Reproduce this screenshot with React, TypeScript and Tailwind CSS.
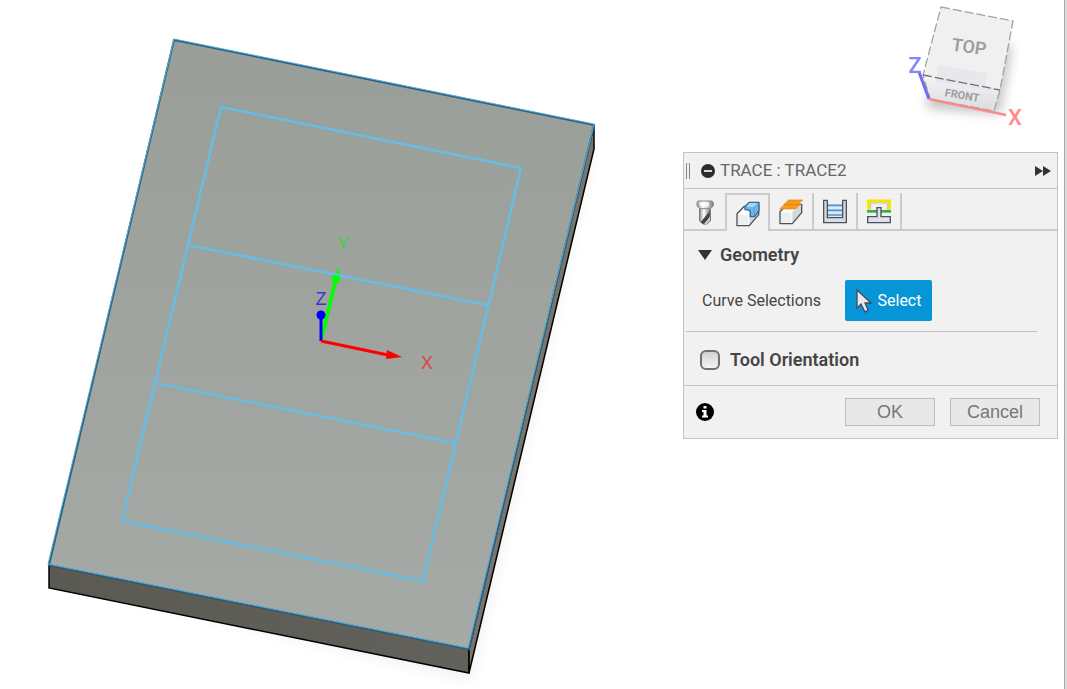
import type { ReactNode } from 'react';

function ToolIcon() {
  return (
    <svg viewBox="0 0 78 78" className="h-[26px] w-[26px]" aria-hidden="true">
      <defs>
        <linearGradient id="shank" x1="0" x2="1" y1="0" y2="0">
          <stop offset="0" stopColor="#9a9a9a" />
          <stop offset="0.4" stopColor="#ffffff" />
          <stop offset="1" stopColor="#7a7a7a" />
        </linearGradient>
      </defs>
      <path d="M23 28h32v38l-10 9H33l-10-9z" fill="url(#shank)" stroke="#6a6a6a" strokeWidth="3" />
      <path d="M26 70 53 36v20L35 75z" fill="#444444" />
      <path d="M46 74 54 64V52L38 75z" fill="#cccccc" />
      <path d="M18 6h42l4 5v10l-9 8H24l-9-8V11z" fill="url(#shank)" stroke="#8a8a8a" strokeWidth="3" />
      <path d="M21 10h30v12H26z" fill="#ffffff" opacity="0.8" />
    </svg>
  );
}

function Block() {
  return (
    <>
      <path d="M6 38 28 16h43v25L43 74H6z" fill="#ffffff" />
      <path d="M43 38 71 16v25L43 74z" fill="#d3d6da" />
      <path d="M9 41h31v30H9z" fill="#eceef0" />
      <path d="M6 38 28 16h43v25L43 74H6z" fill="none" stroke="#4c525c" strokeWidth="4" strokeLinejoin="round" />
    </>
  );
}

function GeometryIcon() {
  return (
    <svg viewBox="0 0 78 78" className="h-[26px] w-[26px]" aria-hidden="true">
      <Block />
      <path d="M30 17 43 4h29v25L58 47H46V34q0-8-16-8z" fill="#6fb5e6" stroke="#286a9f" strokeWidth="4" strokeLinejoin="round" />
      <path d="M33 17 44 6h25L58 18z" fill="#a8d6f5" />
      <path d="M57 20v24M57 19 69 7" stroke="#4a91c8" strokeWidth="2" />
    </svg>
  );
}

function HeightsIcon() {
  return (
    <svg viewBox="0 0 78 78" className="h-[26px] w-[26px]" aria-hidden="true">
      <Block />
      <path d="M5 30 20 16h48L52 30z" fill="#f59b1c" stroke="#db8412" strokeWidth="2" />
      <path d="M17 17 32 3h42L58 17z" fill="#f59b1c" stroke="#db8412" strokeWidth="2" />
    </svg>
  );
}

function PassesIcon() {
  return (
    <svg viewBox="0 0 78 78" className="h-[26px] w-[26px]" aria-hidden="true">
      <path d="M17 14h44v44H17z" fill="#dde8f3" />
      <path d="M18 19h42M18 34h42M18 48h42" stroke="#4a93d6" strokeWidth="5" />
      <path d="M5 4h11v52h46V4h11v67H5z" fill="#d9dde3" stroke="#4c525c" strokeWidth="4" />
    </svg>
  );
}

function LinkingIcon() {
  return (
    <svg viewBox="0 0 78 78" className="h-[26px] w-[26px]" aria-hidden="true">
      <path d="M8 32V6h62v26" fill="none" stroke="#f7e500" strokeWidth="9" />
      <path d="M14 32V12h50v20" fill="none" stroke="#b8b48a" strokeWidth="2" />
      <path d="M3 37h72" stroke="#38ad4b" strokeWidth="8" />
      <path d="M33 26h12v27h28v18H5V53h28z" fill="#dde1e7" stroke="#4c525c" strokeWidth="4" />
    </svg>
  );
}

function Model() {
  return (
    <svg viewBox="0 0 683 689" className="block w-full" role="img" aria-label="Stock model">
      <defs>
        <linearGradient id="face" x1="0" x2="0" y1="0" y2="1">
          <stop offset="0" stopColor="#999e99" />
          <stop offset="1" stopColor="#a5aaa6" />
        </linearGradient>
        <linearGradient id="edge" x1="0" x2="1" y1="0" y2="0">
          <stop offset="0" stopColor="#5a5952" />
          <stop offset="1" stopColor="#62615b" />
        </linearGradient>
        <filter id="soft" x="-10%" y="-10%" width="120%" height="130%">
          <feGaussianBlur stdDeviation="7" />
        </filter>
      </defs>
      <path d="M54 580 594 145 474 668 470 680z" fill="#000000" opacity="0.06" filter="url(#soft)" />
      <path d="M49 565 469 649V673L49 588z" fill="url(#edge)" stroke="#000000" strokeWidth="1.5" />
      <path d="M594 125V149L469 673V649z" fill="#77756d" stroke="#000000" strokeWidth="1.5" />
      <path d="M174 40 594 125 469 649 49 565z" fill="url(#face)" stroke="#2c6384" strokeWidth="2" />
      <path d="M174 39 594 124 468 648 48 564z" fill="none" stroke="#58acd2" strokeWidth="1" />
      <g fill="none" stroke="#66bde6" strokeWidth="2.5">
        <path d="M221 107 521 168 423 581 122 521z" />
        <path d="M188 245 487 305M155 383 455 443" />
      </g>
      <path d="M321 341 336 279" stroke="#00ff00" strokeWidth="3.5" />
      <path d="M339 268 340 281 331 279z" fill="#00ff00" />
      <circle cx="336" cy="279" r="4" fill="#00ff00" />
      <path d="M331 273 343 276" stroke="#66bde6" strokeWidth="2" />
      <path d="M321 341V315" stroke="#0000ff" strokeWidth="3" />
      <circle cx="321" cy="315" r="4.5" fill="#0000ff" />
      <path d="M321 341 388 355" stroke="#ff0000" strokeWidth="3" />
      <path d="M402 357 387 350 386 359z" fill="#ff0000" />
      <g fontFamily="Liberation Sans, sans-serif" fontSize="18" textAnchor="middle">
        <text x="343" y="250" fill="#45d045">Y</text>
        <text x="321" y="305" fill="#3535cf">Z</text>
        <text x="427" y="369" fill="#dc4545">X</text>
      </g>
    </svg>
  );
}

function ViewCube() {
  return (
    <svg viewBox="900 0 130 140" className="h-[140px] w-[130px]" role="img" aria-label="View cube">
      <defs>
        <filter id="cubeShadow" x="-30%" y="-30%" width="160%" height="160%">
          <feGaussianBlur stdDeviation="6" />
        </filter>
        <linearGradient id="front" x1="0" x2="0" y1="0" y2="1">
          <stop offset="0" stopColor="#f4f4f5" />
          <stop offset="1" stopColor="#dcdcde" />
        </linearGradient>
      </defs>
      <path d="M945 34 1012 46 1000 114 926 108z" fill="#000000" opacity="0.24" filter="url(#cubeShadow)" />
      <path d="M923 75 1000 90 994 111 930 99z" fill="url(#front)" />
      <path d="M941 7 1013 21 1000 90 923 75z" fill="#f0f0f1" />
      <path d="M938 65 987 73 985 90 936 82z" fill="#e6e8eb" />
      <path
        d="M941 7 1013 21 1000 90 994 111 930 99 923 75z"
        fill="none"
        stroke="#a3a3a3"
        strokeWidth="1.3"
        strokeDasharray="9 3"
      />
      <path d="M923 75 1000 90" stroke="#707070" strokeWidth="1.3" strokeDasharray="9 3" />
      <g fontFamily="Roboto, sans-serif" textAnchor="middle" fill="#9b9ea4">
        <text x="969" y="53" fontSize="18" fontWeight="600" transform="rotate(8 969 47)">TOP</text>
        <text x="962" y="99" fontSize="11" fontWeight="700" transform="rotate(10 962 96)">FRONT</text>
      </g>
      <path d="M919 72 929 99" stroke="#6e6ef5" strokeWidth="3" />
      <path d="M929 99 1006 115" stroke="#f98b8b" strokeWidth="2.5" />
      <g fontFamily="Roboto, sans-serif" fontSize="22" fontWeight="500" textAnchor="middle">
        <text x="915" y="73" fill="#8686fa">Z</text>
        <text x="1015" y="125" fill="#ff8c8c">X</text>
      </g>
    </svg>
  );
}

interface TabProps {
  label: string;
  active?: boolean;
  first?: boolean;
  children: ReactNode;
}

function Tab({ label, active, first, children }: TabProps) {
  const edges = active
    ? 'w-[45px] border-2 border-b-0 pb-0.5'
    : first
      ? 'w-[41px] border-b-2'
      : 'w-[44px] border-b-2 border-r-2';
  return (
    <button
      type="button"
      role="tab"
      aria-selected={!!active}
      aria-label={label}
      className={`flex h-[38px] items-end justify-center border-[#cbcbcb] pb-1 ${edges}`}
    >
      {children}
    </button>
  );
}

function TracePanel() {
  return (
    <section className="w-full border border-[#c4c4c4] bg-[#f1f1f1] text-[#454545]">
      <header className="flex h-[36px] items-center border-b border-[#c4c4c4] pr-1.5 pl-0.5">
        <span className="h-4 w-1 border-x border-[#858585]" />
        <button type="button" aria-label="Collapse" className="ml-[11px] flex h-[14px] w-[14px] items-center justify-center rounded-full bg-[#2d2d2d]">
          <span className="h-0.5 w-2 bg-[#d8d8d8]" />
        </button>
        <h1 className="ml-[5px] flex-1 font-[Roboto,sans-serif] text-[17px] text-[#666666]">TRACE : TRACE2</h1>
        <button type="button" aria-label="Expand">
          <svg viewBox="0 0 16 10" className="h-[10px] w-4" aria-hidden="true">
            <path d="M0 0 8 5 0 10zM8 0 16 5 8 10z" fill="#333333" />
          </svg>
        </button>
      </header>

      <div role="tablist" className="flex pt-1">
        <Tab label="Tool" first><ToolIcon /></Tab>
        <Tab label="Geometry" active><GeometryIcon /></Tab>
        <Tab label="Heights"><HeightsIcon /></Tab>
        <Tab label="Passes"><PassesIcon /></Tab>
        <Tab label="Linking"><LinkingIcon /></Tab>
        <span className="flex-1 border-b-2 border-[#cbcbcb]" />
      </div>

      <div className="pr-5 pl-0.5 pt-3">
        <button type="button" aria-expanded="true" className="flex h-6 items-center gap-2 pl-3 font-[Roboto,sans-serif] text-lg font-semibold">
          <svg viewBox="0 0 14 10" className="h-[10px] w-[14px]" aria-hidden="true">
            <path d="M0 0H14L7 10z" fill="#333333" />
          </svg>
          Geometry
        </button>
        <div className="mt-[13px] flex items-center gap-6 pb-[10px] pl-4 font-[Roboto,sans-serif] text-base">
          <span id="curves">Curve Selections</span>
          <button type="button" aria-describedby="curves" className="flex h-[41px] w-[87px] items-center justify-center gap-1.5 rounded-xs bg-[#0696d7] text-white">
            <svg viewBox="0 0 16 24" className="h-6 w-4" aria-hidden="true">
              <path d="M1 1V19L5 15 9 23 12 21 9 14H15z" fill="#e8e9ef" stroke="#454b57" strokeWidth="1.3" />
            </svg>
            Select
          </button>
        </div>
        <div className="border-t border-[#c4c4c4] pt-4 pb-[13px] pl-3.5">
          <label className="flex h-6 items-center gap-2.5 font-[Roboto,sans-serif] text-lg font-semibold">
            <input
              type="checkbox"
              className="h-5 w-5 appearance-none rounded-md border-2 border-[#707070] bg-linear-to-b from-[#d2d2d2] to-[#f3f3f3]"
            />
            Tool Orientation
          </label>
        </div>
      </div>

      <footer className="flex h-[53px] items-center border-t border-[#c4c4c4] pr-[17px] pl-3">
        <button type="button" aria-label="Information" className="mr-auto">
          <svg viewBox="0 0 18 18" className="h-[18px] w-[18px]" aria-hidden="true">
            <circle cx="9" cy="9" r="9" fill="#000000" />
            <path d="M7.5 3h3v2.5h-3zM6 7h4.5v5.5H12v2H6v-2h1.500V9H6z" fill="#ffffff" />
          </svg>
        </button>
        <div className="flex gap-[15px] font-[Liberation_Sans,sans-serif] text-lg text-[#777777]">
          <button type="button" className="flex h-7 w-[90px] items-center justify-center border border-[#bdbdbd] bg-[#e8e8e8]">OK</button>
          <button type="button" className="flex h-7 w-[90px] items-center justify-center border border-[#bdbdbd] bg-[#e8e8e8]">Cancel</button>
        </div>
      </footer>
    </section>
  );
}

export default function App() {
  return (
    <main className="flex min-h-screen items-start bg-white">
      <div className="min-w-0 flex-1">
        <Model />
      </div>
      <aside className="flex w-[375px] shrink-0 flex-col">
        <div className="flex justify-end pr-7 pb-3">
          <ViewCube />
        </div>
        <TracePanel />
      </aside>
      <div className="ml-1.5 w-[3px] shrink-0 self-stretch border-l border-[#a5a5a5] bg-[#dddddd]" />
    </main>
  );
}
